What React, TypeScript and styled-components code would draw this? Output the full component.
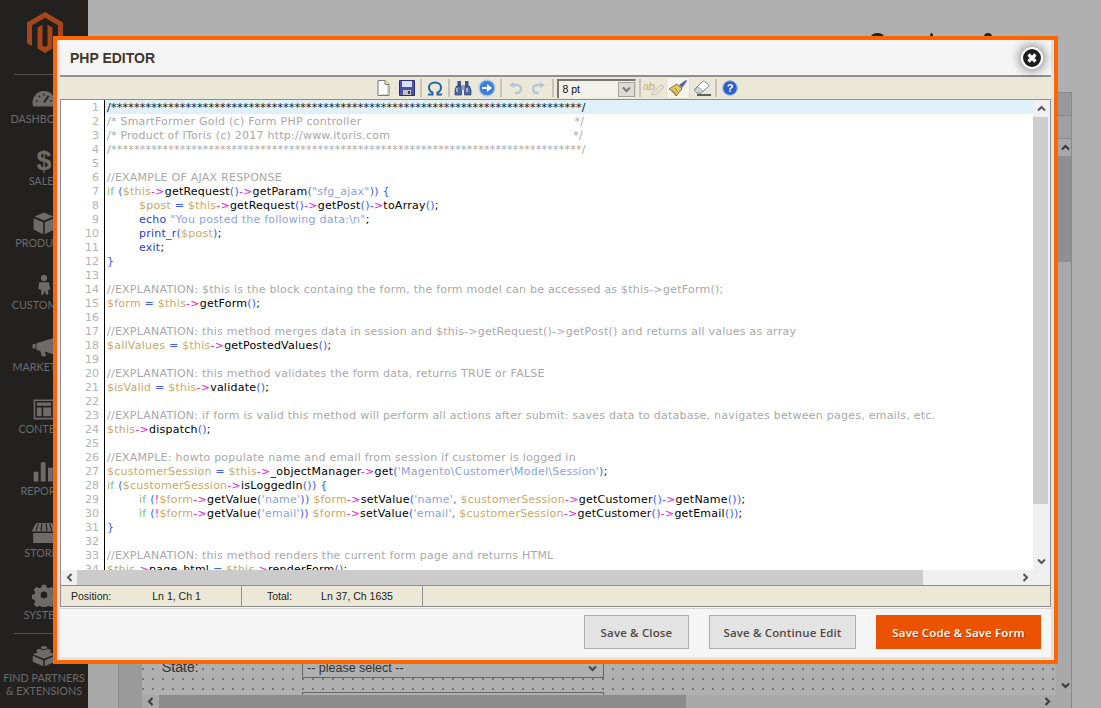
import React from "react"
import styled, { createGlobalStyle } from "styled-components"

const GlobalStyle = createGlobalStyle`
  html, body {
    margin: 0;
    padding: 0;
    height: 100%;
    overflow: hidden;
    background: #b0b0b0;
    font-family: "Open Sans", sans-serif;
  }
`

const Page = styled.div`
  position: relative;
  display: flex;
  width: 1101px;
  height: 708px;
  overflow: hidden;
`

/* ---- dimmed admin page behind the dialog ---- */

const Sidebar = styled.nav`
  width: 88px;
  flex: none;
  display: flex;
  flex-direction: column;
  align-items: center;
  background: #222120;
  color: #6e6b68;
`

const LogoBox = styled.div`
  height: 75px;
  width: 74px;
  margin-left: 14px;
  box-sizing: border-box;
  padding: 12px 0 0 13px;
  border-bottom: 1px solid #55524f;
`

const NavItem = styled.div`
  height: 62px;
  width: 88px;
  display: flex;
  flex-direction: column;
  align-items: center;
  justify-content: flex-end;
  font-family: Lato, sans-serif;
  font-size: 10.8px;
  line-height: 14px;
  padding-bottom: 11px;
  box-sizing: border-box;
  white-space: nowrap;
`

const NavGlyph = styled.div`
  height: 26px;
  display: flex;
  align-items: center;
  justify-content: center;
  font-family: "Liberation Sans", sans-serif;
  font-weight: 700;
  font-size: 27px;
  line-height: 26px;
`

const NavRule = styled.div`
  width: 74px;
  margin-left: 14px;
  margin-bottom: 8px;
  border-top: 1px solid #55524f;
`

const PartnerItem = styled.div`
  text-align: center;
  font-family: Lato, sans-serif;
  font-size: 10.8px;
  line-height: 13px;
  white-space: nowrap;
  margin-top: 3px;
`

const Main = styled.div`
  flex: 1;
  display: flex;
  flex-direction: column;
`

const TopBar = styled.div`
  height: 92px;
  flex: none;
  box-sizing: border-box;
  padding: 33px 0 0 783px;
  display: flex;
  align-items: flex-start;
`

const HeaderMark = styled.div<{ $width: number; $gap: number }>`
  width: ${(p) => p.$width}px;
  height: 8px;
  margin-left: ${(p) => p.$gap}px;
  border-radius: 50%;
  background: #222;
  flex: none;
`

const Workspace = styled.div`
  flex: 1;
  display: flex;
  min-height: 0;
`

const Gutter = styled.div`
  width: 31px;
  flex: none;
  background: #a8a8a8;
  border-right: 1px solid #8e8e8e;
  box-sizing: border-box;
`

const Tabs = styled.div`
  width: 23px;
  flex: none;
  background: #9a9a9a;
`

const FormColumn = styled.div`
  width: 914px;
  flex: none;
  display: flex;
  flex-direction: column;
`

const Dotted = styled.div`
  flex: 1;
  display: flex;
  flex-direction: column;
  justify-content: flex-end;
  background-color: #b0b0b0;
  background-image: radial-gradient(#555 0.6px, transparent 0.9px);
  background-size: 10px 10px;
  background-position: 6px 2px;
  border-radius: 0 0 3px 0;
`

const FormRow = styled.div<{ $cut?: boolean }>`
  display: flex;
  align-items: flex-start;
  height: ${(p) => (p.$cut ? 3 : 20)}px;
  margin-bottom: ${(p) => (p.$cut ? 0 : 14)}px;
  overflow: hidden;
  padding-left: 20px;
  font-family: "Liberation Sans", sans-serif;
  color: #333;
`

const StateLabel = styled.span`
  font-size: 14px;
  line-height: 18px;
  width: 140px;
`

const FormSelect = styled.div`
  width: 302px;
  height: 20px;
  box-sizing: border-box;
  border: 1px solid #666;
  padding: 0 6px 0 4px;
  font-size: 12.5px;
  line-height: 18px;
  display: flex;
  align-items: center;
  justify-content: space-between;
  background: #b0b0b0;
`

const PageScrollX = styled.div`
  height: 13px;
  flex: none;
  background: #a8a8a8;
  display: flex;
  align-items: center;
  padding: 0 4px;
`

const PageScrollThumb = styled.div`
  width: 527px;
  height: 13px;
  background: #8c8c8c;
  margin-left: 4px;
  margin-right: auto;
`

const Rail = styled.div`
  width: 16px;
  flex: none;
  background: #a8a8a8;
  border-right: 1px solid #8a8a8a;
  box-sizing: border-box;
  display: flex;
  flex-direction: column;
  align-items: flex-end;
`

const RailBlock = styled.div<{ $dots?: boolean }>`
  height: 23px;
  width: 100%;
  box-sizing: border-box;
  background: ${(p) => (p.$dots ? "#a0a0a0" : "#999")};
  border-top: 1px solid #8a8a8a;
`

const RailUp = styled.div`
  height: 18px;
  width: 100%;
  box-sizing: border-box;
  padding-left: 3px;
  border-top: 1px solid #8a8a8a;
  display: flex;
  align-items: center;
  justify-content: center;
`

const RailThumb = styled.div`
  height: 106px;
  width: 13px;
  background: #8f8f8f;
`

const RailFill = styled.div`
  flex: 1;
  width: 100%;
  box-sizing: border-box;
  display: flex;
  flex-direction: column;
  justify-content: flex-end;
  align-items: center;
  padding: 0 0 18px 3px;
`

/* ---- dialog ---- */

const Dialog = styled.section`
  position: absolute;
  left: 53px;
  top: 36px;
  width: 1005px;
  height: 628px;
  box-sizing: border-box;
  border: 4px solid #ff6600;
  background: #e2e2e2;
  padding: 0 3px 3px;
`

const DialogInner = styled.div`
  height: 100%;
  background: #f5f5f5;
  display: flex;
  flex-direction: column;
`

const TitleBar = styled.header`
  height: 35px;
  flex: none;
  display: flex;
  align-items: center;
  padding-left: 10px;
  font-family: "Liberation Sans", sans-serif;
  font-size: 14px;
  font-weight: 700;
  color: #41362f;
`

const CloseButton = styled.button`
  position: absolute;
  right: 11px;
  top: 7px;
  width: 22px;
  height: 22px;
  padding: 0;
  border: 2px solid #fff;
  border-radius: 50%;
  background: #1d1d1d;
  box-shadow: 0 0 8px 3px rgba(0, 0, 0, 0.35);
  display: flex;
  align-items: center;
  justify-content: center;
`

const Toolbar = styled.div`
  height: 25px;
  flex: none;
  box-sizing: border-box;
  border-top: 2px solid #8f8f8f;
  border-bottom: 1px solid #8f8f8f;
  background: #ebe8d8;
  display: flex;
  align-items: center;
  justify-content: center;
  padding-left: 1px;
`

const ToolButton = styled.div<{ $active?: boolean }>`
  width: 24px;
  height: 22px;
  box-sizing: border-box;
  display: flex;
  align-items: center;
  justify-content: center;
  background: ${(p) => (p.$active ? "#f5f4ec" : "transparent")};
  border: 1px solid ${(p) => (p.$active ? "#e2dfce" : "transparent")};
`

const ToolRule = styled.div`
  width: 2px;
  height: 18px;
  margin: 0 1px;
  background: #c4c2b6;
`

const SizeSelect = styled.div`
  width: 79px;
  height: 19px;
  margin: 0 2px;
  box-sizing: border-box;
  border-top: 2px solid #77766f;
  border-left: 2px solid #77766f;
  border-right: 1px solid #d8d6c8;
  background: #f2f1ea;
  display: flex;
  align-items: center;
  justify-content: space-between;
  font-family: "Liberation Sans", sans-serif;
  font-size: 10.5px;
  color: #111;
  padding-left: 4px;
`

const SizeArrow = styled.div`
  width: 17px;
  height: 15px;
  box-sizing: border-box;
  background: #dcdbd3;
  border: 1px solid #a4a49c;
  display: flex;
  align-items: center;
  justify-content: center;
`

const EditorGrid = styled.div`
  height: 485px;
  flex: none;
  display: grid;
  grid-template-columns: 972px 17px;
  grid-template-rows: 470px 15px;
  background: #fff;
  border-left: 1px solid #8f8f8f;
  border-right: 1px solid #8f8f8f;
  box-sizing: border-box;
`

const CodePane = styled.div`
  overflow: hidden;
  min-width: 0;
  min-height: 0;
`

const CodeRow = styled.div<{ $active?: boolean }>`
  display: flex;
  height: 14px;
  background: ${(p) => (p.$active ? "#e0f0f8" : "transparent")};
`

const LineNumber = styled.div`
  width: 38px;
  height: 13px;
  flex: none;
  background: #fff;
  text-align: right;
  padding: 1px 5px 0 0;
  border-right: 1px solid #000;
  margin-right: 2px;
  font-family: "DejaVu Sans", sans-serif;
  font-size: 11px;
  line-height: 14px;
  color: #b3b3b3;
`

const CodeText = styled.div<{ $indent?: boolean }>`
  white-space: pre;
  font-family: "DejaVu Sans", sans-serif;
  font-size: 11px;
  letter-spacing: 0.24px;
  line-height: 14px;
  padding: 1px 0 0 ${(p) => (p.$indent ? "32px" : "0")};
`

const Token = styled.span<{ $kind: string }>`
  color: ${(p) => tokenColors[p.$kind] ?? "#000"};
`

const ScrollY = styled.div`
  background: #f0f0f0;
  display: flex;
  flex-direction: column;
`

const ScrollButton = styled.div`
  height: 17px;
  flex: none;
  display: flex;
  align-items: center;
  justify-content: center;
`

const ScrollThumbY = styled.div`
  height: 387px;
  width: 15px;
  flex: none;
  background: #cdcdcd;
`

const ScrollYFill = styled.div`
  flex: 1;
`

const ScrollX = styled.div`
  background: #f0f0f0;
  display: flex;
  align-items: center;
`

const ArrowCell = styled.div`
  width: 16px;
  height: 15px;
  flex: none;
  display: flex;
  align-items: center;
  justify-content: center;
`

const ScrollThumbX = styled.div`
  width: 846px;
  height: 15px;
  background: #cbcbcb;
  margin-right: auto;
`

const Corner = styled.div`
  background: #f0f0f0;
`

const StatusBar = styled.div`
  height: 22px;
  flex: none;
  box-sizing: border-box;
  border: 1px solid #8f8f8f;
  background: #ebe8d8;
  display: flex;
  font-family: "Liberation Sans", sans-serif;
  font-size: 10.5px;
  color: #222;
  line-height: 20px;
`

const StatusCell = styled.div<{ $width: number; $gap: number; $pad: number }>`
  width: ${(p) => p.$width}px;
  box-sizing: border-box;
  border-right: 1px solid #8f8f8f;
  padding-left: ${(p) => p.$pad}px;
  display: flex;
  gap: ${(p) => p.$gap}px;
`

const Footer = styled.footer`
  flex: 1;
  display: flex;
  align-items: center;
  justify-content: flex-end;
  gap: 20px;
  padding: 0 10px 2px 0;
  border-top: 1px solid #d4d4d4;
  margin-top: 1px;
`

const Button = styled.button<{ $primary?: boolean; $width: number }>`
  width: ${(p) => p.$width}px;
  height: 34px;
  box-sizing: border-box;
  padding: 0;
  font-family: "Open Sans", sans-serif;
  font-size: 11.5px;
  font-weight: 600;
  letter-spacing: 0.15px;
  color: ${(p) => (p.$primary ? "#fff" : "#514943")};
  background: ${(p) => (p.$primary ? "#eb5202" : "#e3e3e3")};
  border: ${(p) => (p.$primary ? "none" : "1px solid #adadad")};
  text-shadow: ${(p) => (p.$primary ? "1px 1px 0 rgba(0,0,0,0.25)" : "none")};
`

const tokenColors: Record<string, string> = {
  comment: "#a8a8a8",
  variable: "#c8a964",
  arrow: "#d91ed9",
  keyword: "#8cc25a",
  builtin: "#2340dc",
  string: "#8e9fe0",
  paren: "#3a5cf0",
  plain: "#000",
  head: "#111",
}

const stars = "*".repeat(82)

const codeLines = [
  `/${stars}/`,
  `/* SmartFormer Gold (c) Form PHP controller${" ".repeat(57)}*/`,
  `/* Product of IToris (c) 2017 http://www.itoris.com${" ".repeat(49)}*/`,
  `/${stars}/`,
  "",
  "//EXAMPLE OF AJAX RESPONSE",
  'if ($this->getRequest()->getParam("sfg_ajax")) {',
  "\t$post = $this->getRequest()->getPost()->toArray();",
  '\techo "You posted the following data:\\n";',
  "\tprint_r($post);",
  "\texit;",
  "}",
  "",
  "//EXPLANATION: $this is the block containg the form, the form model can be accessed as $this->getForm();",
  "$form = $this->getForm();",
  "",
  "//EXPLANATION: this method merges data in session and $this->getRequest()->getPost() and returns all values as array",
  "$allValues = $this->getPostedValues();",
  "",
  "//EXPLANATION: this method validates the form data, returns TRUE or FALSE",
  "$isValid = $this->validate();",
  "",
  "//EXPLANATION: if form is valid this method will perform all actions after submit: saves data to database, navigates between pages, emails, etc.",
  "$this->dispatch();",
  "",
  "//EXAMPLE: howto populate name and email from session if customer is logged in",
  "$customerSession = $this->_objectManager->get('Magento\\Customer\\Model\\Session');",
  "if ($customerSession->isLoggedIn()) {",
  "\tif (!$form->getValue('name')) $form->setValue('name', $customerSession->getCustomer()->getName());",
  "\tif (!$form->getValue('email')) $form->setValue('email', $customerSession->getCustomer()->getEmail());",
  "}",
  "",
  "//EXPLANATION: this method renders the current form page and returns HTML",
  "$this->page_html = $this->renderForm();",
]

const tokenPattern =
  /(\$\w+)|(->|!)|(\bif\b)|(\b(?:echo|print_r|exit)\b)|("[^"]*"|'[^']*')|([(){}=,])|([^$\-!(){}=,"']+|-)/g

// small highlighter, good enough for the snippet in the editor
const tokenize = (line: string, index: number) => {
  if (index === 0) return [{ kind: "head", text: line }]
  if (line.startsWith("/")) return [{ kind: "comment", text: line }]
  const kinds = ["variable", "arrow", "keyword", "builtin", "string", "paren", "word"]
  const out: { kind: string; text: string }[] = []
  for (const m of line.matchAll(tokenPattern)) {
    const at = m.slice(1).findIndex(Boolean)
    out.push({ kind: kinds[at], text: m[0] })
  }
  return out
}

const Chevron = ({ dir, color = "#555" }: { dir: "up" | "down" | "left" | "right"; color?: string }) => {
  const rotate = { up: 0, right: 90, down: 180, left: 270 }[dir]
  return (
    <svg width="9" height="9" viewBox="0 0 9 9" style={{ transform: `rotate(${rotate}deg)` }}>
      <path d="M1 6.5 4.5 3 8 6.5" fill="none" stroke={color} strokeWidth="2" />
    </svg>
  )
}

const MagentoLogo = () => (
  <svg width="36" height="41" viewBox="0 0 36 41">
    <path
      fill="#a8461a"
      d="M18 0 0 10.4v20.8l5 2.9V13.3l13-7.5 13 7.5v20.8l5-2.9V10.4zM15.5 12.8l-4.9 2.8v20.9L18 41l7.4-4.5V15.6l-4.9-2.8v20.8L18 35.1l-2.5-1.5z"
    />
  </svg>
)

const navIcons: Record<string, React.ReactNode> = {
  dashboard: (
    <svg width="26" height="21" viewBox="0 2 34 26">
      <path fill="#6e6b68" d="M17 4a15 15 0 0 0-15 15c0 2 .4 4 1 5h28c.6-1 1-3 1-5A15 15 0 0 0 17 4z" />
      <path d="M17 19l6-9" stroke="#222120" strokeWidth="2.4" />
      <path d="M6 17h3M10 10l2 2M17 7v3M28 17h-3" stroke="#222120" strokeWidth="1.5" />
    </svg>
  ),
  products: (
    <svg width="24" height="24" viewBox="0 0 30 30">
      <path fill="#6e6b68" d="M15 2 3 7l12 5 12-5zM2 9v14l12 6V14zM28 9l-12 5v15l12-6z" />
    </svg>
  ),
  customers: (
    <svg width="14" height="24" viewBox="0 0 20 30">
      <circle cx="10" cy="5" r="4.5" fill="#6e6b68" />
      <path fill="#6e6b68" d="M3 11h14l2 10-3 1v7h-3l-2-6-2 6H6v-7l-3-1-1-1z" />
    </svg>
  ),
  marketing: (
    <svg width="26" height="20" viewBox="0 0 34 26">
      <path fill="#6e6b68" d="M2 9h4v6H2zM7 8l24-7v22L18 19l2 6h-6l-2-7-5-1z" />
    </svg>
  ),
  content: (
    <svg width="24" height="24" viewBox="0 0 30 30">
      <path fill="#6e6b68" fillRule="evenodd" d="M2 3h26v25H2zm2 2v21h22V5z" />
      <path fill="#6e6b68" d="M6 7h18v4H6zM6 13h6v11H6zM14 13h10v11H14z" />
    </svg>
  ),
  reports: (
    <svg width="24" height="22" viewBox="0 0 30 26">
      <path fill="#6e6b68" d="M2 14h6v12H2zM11 2h6v24h-6zM20 9h6v17h-6z" />
    </svg>
  ),
  stores: (
    <svg width="26" height="22" viewBox="0 0 36 30">
      <path fill="#6e6b68" d="M7 1h22l6 12H1zM3 15h30v14H3z" />
      <path d="M10 2 7 12M15 2l-1 10M21 2l1 10M26 2l3 10" stroke="#222120" strokeWidth="1.6" />
    </svg>
  ),
  system: (
    <svg width="24" height="24" viewBox="0 0 32 32">
      <path
        fill="#6e6b68"
        fillRule="evenodd"
        d="M13 1h6l1 4 3 1 4-2 4 4-2 4 1 3 4 1v6l-4 1-1 3 2 4-4 4-4-2-3 1-1 4h-6l-1-4-3-1-4 2-4-4 2-4-1-3-4-1v-6l4-1 1-3-2-4 4-4 4 2 3-1zM16 11a5 5 0 1 0 0 10 5 5 0 0 0 0-10z"
        transform="translate(1.5 1.5) scale(.9)"
      />
    </svg>
  ),
  partners: (
    <svg width="24" height="24" viewBox="0 0 32 30">
      <path fill="#6e6b68" d="M16 8 1 14l15 6 15-6zM1 16v8l14 6v-8zM31 16v8l-14 6v-8z" />
      <ellipse cx="10" cy="9" rx="4" ry="2" fill="#6e6b68" />
      <ellipse cx="21" cy="9" rx="4" ry="2" fill="#6e6b68" />
      <ellipse cx="16" cy="5" rx="4" ry="2" fill="#6e6b68" />
    </svg>
  ),
}

const navItems = [
  { label: "DASHBOARD", icon: navIcons.dashboard },
  { label: "SALES", icon: <span>$</span> },
  { label: "PRODUCTS", icon: navIcons.products },
  { label: "CUSTOMERS", icon: navIcons.customers },
  { label: "MARKETING", icon: navIcons.marketing },
  { label: "CONTENT", icon: navIcons.content },
  { label: "REPORTS", icon: navIcons.reports },
  { label: "STORES", icon: navIcons.stores },
  { label: "SYSTEM", icon: navIcons.system },
]

const NewIcon = () => (
  <svg width="14" height="16" viewBox="0 0 14 16">
    <path d="M2 .5h7L13 4.5v11H2z" fill="#fff" stroke="#7a7a6e" />
    <path d="M9 .5v4h4" fill="#e4e4dc" stroke="#7a7a6e" />
    <path d="M11.5 6v8.5H4" fill="none" stroke="#d5d5c8" />
  </svg>
)

const SaveIcon = () => (
  <svg width="16" height="16" viewBox="0 0 16 16">
    <path d="M.5.5h15v15H.5z" fill="#4a53a8" stroke="#2b2f78" />
    <path d="M3 1h10v6H3z" fill="#dde0f2" />
    <path d="M4 10h8v5H4z" fill="#c4c4c8" />
    <path d="M9 11h2v3H9z" fill="#33356b" />
  </svg>
)

const OmegaIcon = () => (
  <svg width="16" height="15" viewBox="0 0 16 15">
    <path
      d="M1 13.5h4.5v-2C3 10.5 2 8.5 2 6.5 2 3.5 4.5 1.5 8 1.5s6 2 6 5c0 2-1 4-3.5 5v2H15"
      fill="none"
      stroke="#2562a8"
      strokeWidth="2"
    />
  </svg>
)

const FindIcon = () => (
  <svg width="18" height="16" viewBox="0 0 18 16">
    <path d="M3.5 1H7v5H3.5zM11 1h3.5v5H11z" fill="#40557f" />
    <path d="M2.5 6h5v9H1V10zM10.5 6h5L17 10v5h-6.5z" fill="#4a68a8" stroke="#2b3d66" strokeWidth=".7" />
    <path d="M7.5 5h3v5h-3z" fill="#8ea0c8" />
    <path d="M3 8v4M13 8v4" stroke="#d8e0f0" strokeWidth="1.2" />
  </svg>
)

const GotoIcon = () => (
  <svg width="18" height="18" viewBox="0 0 18 18">
    <circle cx="9" cy="9" r="8" fill="#3f7fdc" stroke="#b9cdea" strokeWidth="1.4" />
    <path d="M4 8h5V5l5 4-5 4v-3H4z" fill="#fff" />
  </svg>
)

const UndoIcon = ({ flip }: { flip?: boolean }) => (
  <svg width="14" height="14" viewBox="0 0 14 14" style={{ transform: flip ? "scaleX(-1)" : undefined }}>
    <path d="M5 4h4a3 3 0 0 1 0 8H7" fill="none" stroke="#b6c6d8" strokeWidth="2.4" />
    <path d="M1 4l5-3v6z" fill="#b6c6d8" />
  </svg>
)

const SpellIcon = () => (
  <svg width="22" height="16" viewBox="0 0 22 16">
    <text x="0" y="10" fontFamily="Liberation Sans" fontSize="11" fill="#c4ae74">
      ab
    </text>
    <path d="M8 14 18 5l3 2-9 8z" fill="#e8e4d4" stroke="#c8c4b4" />
  </svg>
)

const BroomIcon = () => (
  <svg width="20" height="18" viewBox="0 0 20 18">
    <path d="M1 10 9 5l5 5-6 7C6 14 4 12 1 10z" fill="#e8c860" stroke="#6a5a28" strokeWidth=".8" />
    <path d="M11 6 18 1l1 1-5 7z" fill="#5a5aa8" />
    <path d="M4 11l4 4M7 9l3 4" stroke="#8a7430" strokeWidth=".8" />
  </svg>
)

const EraserIcon = () => (
  <svg width="18" height="16" viewBox="0 0 18 16">
    <path d="M1 10 9 2c1-1 2-1 3 0l3 2c1 1 1 2 0 3l-7 6H4z" fill="#fff" stroke="#78808c" />
    <path d="M1 10l3 3h4l2-2-5-4z" fill="#d0d6e0" stroke="#78808c" strokeWidth=".6" />
    <path d="M4 15h14" stroke="#000" strokeWidth="1.2" />
  </svg>
)

const HelpIcon = () => (
  <svg width="16" height="16" viewBox="0 0 16 16">
    <circle cx="8" cy="8" r="7.2" fill="#2a5fd0" stroke="#8aa8de" />
    <text x="8" y="12" textAnchor="middle" fontFamily="Liberation Sans" fontWeight="700" fontSize="11" fill="#fff">
      ?
    </text>
  </svg>
)

const EditorToolbar = () => (
  <Toolbar>
    <ToolButton>
      <NewIcon />
    </ToolButton>
    <ToolButton>
      <SaveIcon />
    </ToolButton>
    <ToolRule />
    <ToolButton>
      <OmegaIcon />
    </ToolButton>
    <ToolRule />
    <ToolButton>
      <FindIcon />
    </ToolButton>
    <ToolButton>
      <GotoIcon />
    </ToolButton>
    <ToolRule />
    <ToolButton>
      <UndoIcon />
    </ToolButton>
    <ToolButton>
      <UndoIcon flip />
    </ToolButton>
    <ToolRule />
    <SizeSelect>
      8 pt
      <SizeArrow>
        <Chevron dir="down" color="#777" />
      </SizeArrow>
    </SizeSelect>
    <ToolRule />
    <ToolButton>
      <SpellIcon />
    </ToolButton>
    <ToolButton $active>
      <BroomIcon />
    </ToolButton>
    <ToolButton>
      <EraserIcon />
    </ToolButton>
    <ToolRule />
    <ToolButton>
      <HelpIcon />
    </ToolButton>
  </Toolbar>
)

export default function App() {
  return (
    <Page>
      <GlobalStyle />
      <Sidebar>
        <LogoBox>
          <MagentoLogo />
        </LogoBox>
        {navItems.map((item) => (
          <NavItem key={item.label}>
            <NavGlyph>{item.icon}</NavGlyph>
            {item.label}
          </NavItem>
        ))}
        <NavRule />
        <NavGlyph>{navIcons.partners}</NavGlyph>
        <PartnerItem>
          FIND PARTNERS
          <br />& EXTENSIONS
        </PartnerItem>
      </Sidebar>

      <Main>
        <TopBar>
          <HeaderMark $width={13} $gap={0} />
          <HeaderMark $width={3} $gap={46} />
          <HeaderMark $width={8} $gap={51} />
        </TopBar>
        <Workspace>
          <Gutter />
          <Tabs />
          <FormColumn>
            <Dotted>
              <FormRow>
                <StateLabel>State:</StateLabel>
                <FormSelect>
                  -- please select --
                  <Chevron dir="down" color="#444" />
                </FormSelect>
              </FormRow>
              <FormRow $cut>
                <StateLabel />
                <FormSelect />
              </FormRow>
            </Dotted>
            <PageScrollX>
              <Chevron dir="left" color="#3a3a3a" />
              <PageScrollThumb />
              <Chevron dir="right" color="#3a3a3a" />
            </PageScrollX>
          </FormColumn>
          <Rail>
            <RailBlock />
            <RailBlock $dots />
            <RailUp>
              <Chevron dir="up" color="#3a3a3a" />
            </RailUp>
            <RailThumb />
            <RailFill>
              <Chevron dir="down" color="#3a3a3a" />
            </RailFill>
          </Rail>
        </Workspace>
      </Main>

      <Dialog>
        <DialogInner>
          <TitleBar>PHP EDITOR</TitleBar>
          <CloseButton aria-label="Close">
            <svg width="12" height="12" viewBox="0 0 12 12">
              <path d="M2.5 2.5l7 7M9.5 2.5l-7 7" stroke="#fff" strokeWidth="3.2" />
            </svg>
          </CloseButton>
          <EditorToolbar />
          <EditorGrid>
            <CodePane>
              {codeLines.map((line, i) => (
                <CodeRow key={i} $active={i === 0}>
                  <LineNumber>{i + 1}</LineNumber>
                  <CodeText $indent={line.startsWith("\t")}>
                    {tokenize(line.replace("\t", ""), i).map((t, j) => (
                      <Token key={j} $kind={t.kind}>
                        {t.text}
                      </Token>
                    ))}
                  </CodeText>
                </CodeRow>
              ))}
            </CodePane>
            <ScrollY>
              <ScrollButton>
                <Chevron dir="up" />
              </ScrollButton>
              <ScrollThumbY />
              <ScrollYFill />
              <ScrollButton>
                <Chevron dir="down" />
              </ScrollButton>
            </ScrollY>
            <ScrollX>
              <ArrowCell>
                <Chevron dir="left" />
              </ArrowCell>
              <ScrollThumbX />
              <ArrowCell>
                <Chevron dir="right" />
              </ArrowCell>
            </ScrollX>
            <Corner />
          </EditorGrid>
          <StatusBar>
            <StatusCell $width={181} $gap={41} $pad={10}>
              <span>Position:</span>
              <span>Ln 1, Ch 1</span>
            </StatusCell>
            <StatusCell $width={181} $gap={29} $pad={25}>
              <span>Total:</span>
              <span>Ln 37, Ch 1635</span>
            </StatusCell>
          </StatusBar>
          <Footer>
            <Button $width={105}>Save &amp; Close</Button>
            <Button $width={147}>Save &amp; Continue Edit</Button>
            <Button $primary $width={165}>
              Save Code &amp; Save Form
            </Button>
          </Footer>
        </DialogInner>
      </Dialog>
    </Page>
  )
}
